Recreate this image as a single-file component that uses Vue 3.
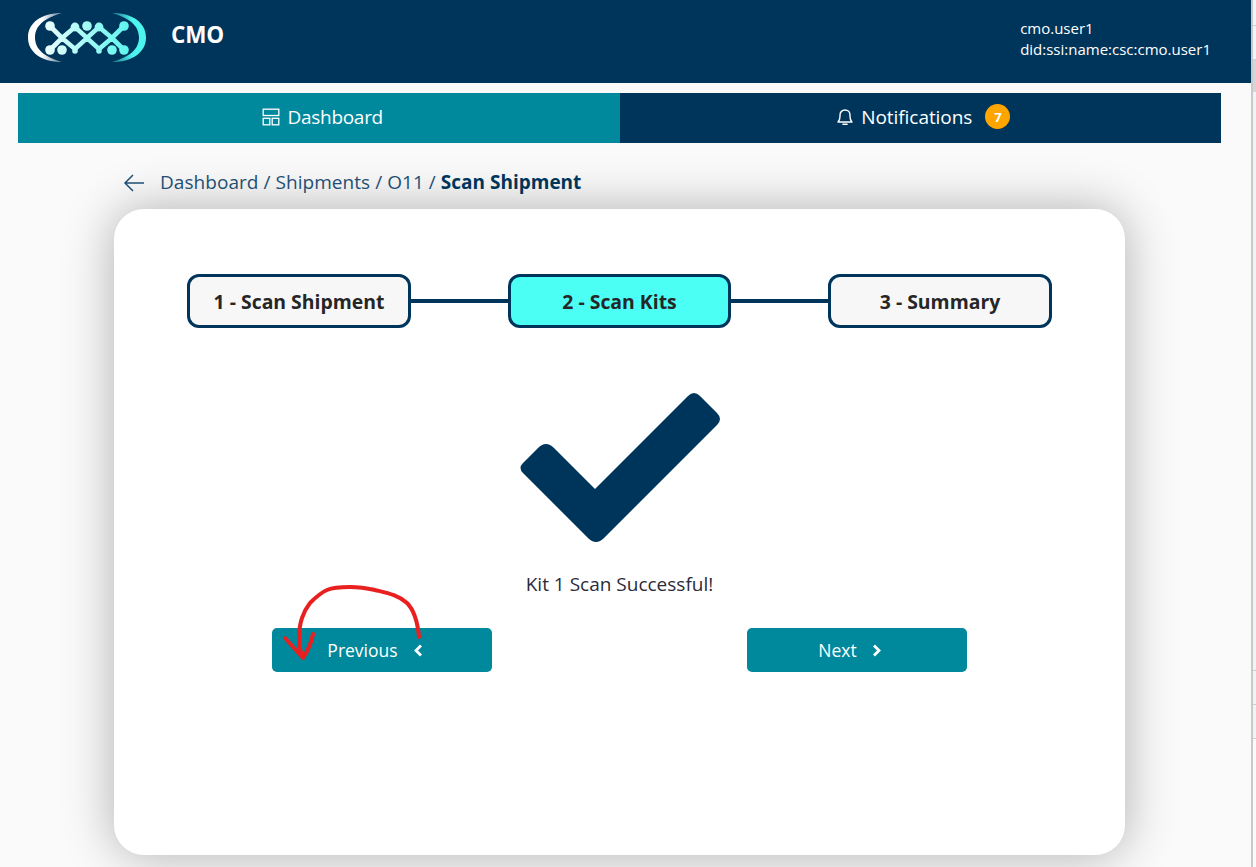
<script setup>
const crumbs = ['Dashboard', 'Shipments', 'O11']
const steps = [
  { label: '1 - Scan Shipment', width: 224 },
  { label: '2 - Scan Kits', width: 223, active: true },
  { label: '3 - Summary', width: 224 },
]
</script>

<template>
  <div class="page">
    <div class="main">
      <header class="topbar">
        <svg class="logo" width="120" height="54" viewBox="0 0 120 54">
          <defs>
            <linearGradient id="lg" gradientUnits="userSpaceOnUse" x1="20" x2="100" y1="0" y2="0">
              <stop offset="0" stop-color="#e8fdfc" />
              <stop offset="1" stop-color="#5ff6ef" />
            </linearGradient>
            <linearGradient id="arcL" gradientUnits="userSpaceOnUse" x1="1" x2="36" y1="0" y2="0">
              <stop offset="0.4" stop-color="#ffffff" />
              <stop offset="1" stop-color="#ffffff" stop-opacity="0.3" />
            </linearGradient>
            <linearGradient id="arcR" gradientUnits="userSpaceOnUse" x1="119" x2="84" y1="0" y2="0">
              <stop offset="0.4" stop-color="#4cf5ee" />
              <stop offset="1" stop-color="#4cf5ee" stop-opacity="0.3" />
            </linearGradient>
          </defs>
          <path d="M35 3 C14 3 1 13 1 27.5 C1 42 14 52 35 52 C22 48 8 42 8 27.5 C8 13 22 7 35 3Z" fill="url(#arcL)" />
          <path d="M85 3 C106 3 119 13 119 27.5 C119 42 106 52 85 52 C98 48 112 42 112 27.5 C112 13 98 7 85 3Z" fill="url(#arcR)" />
          <path d="M23 16 L35 28 L23 40 M35 28 L48 17 L60 28 L72 17 L85 28 L97 16 M85 28 L97 40 M35 28 L48 39 L60 28 L72 39 L85 28" stroke="url(#lg)" stroke-width="4.6" fill="none" stroke-linecap="round" />
          <g fill="url(#lg)">
            <circle cx="23" cy="16" r="4.8" /><circle cx="48" cy="17" r="4.4" />
            <circle cx="60" cy="16" r="4.8" /><circle cx="72" cy="17" r="4.4" />
            <circle cx="97" cy="16" r="4.8" /><circle cx="23" cy="40" r="4.8" />
            <circle cx="35" cy="40" r="4.8" /><circle cx="48" cy="41" r="2.8" />
            <circle cx="72" cy="41" r="2.8" /><circle cx="85" cy="40" r="4.8" />
            <circle cx="97" cy="40" r="4.8" />
          </g>
        </svg>
        <div class="brand">CMO</div>
        <div class="user">
          <div>cmo.user1</div>
          <div>did:ssi:name:csc:cmo.user1</div>
        </div>
      </header>

      <nav class="tabs">
        <div class="tab tab-active">
          <svg width="18" height="18" viewBox="0 0 18 18" fill="none" stroke="#fff" stroke-width="1.3">
            <rect x="1.2" y="1.2" width="15.6" height="6.3" />
            <rect x="1.2" y="10.3" width="6.6" height="6.5" />
            <rect x="10.2" y="10.3" width="6.6" height="6.5" />
          </svg>
          <span>Dashboard</span>
        </div>
        <div class="tab">
          <svg width="16" height="18" viewBox="0 0 16 18" fill="none" stroke="#fff" stroke-width="1.4">
            <path d="M1 14 C2.6 12.4 3 11 3 8.5 V7 C3 4 5.2 2 8 2 C10.8 2 13 4 13 7 V8.5 C13 11 13.4 12.4 15 14 Z" stroke-linejoin="round" />
            <path d="M6 16.3 H10" stroke-linecap="round" stroke-width="1.6" />
          </svg>
          <span class="notif">Notifications</span>
          <span class="badge">7</span>
        </div>
      </nav>

      <div class="content">
        <div class="crumbs">
          <svg class="back" width="22" height="20" viewBox="0 0 22 20" fill="none" stroke="#1f4e73" stroke-width="1.5">
            <path d="M21 10 H2 M10 2 L2 10 L10 18" />
          </svg>
          <span class="trail">
            <template v-for="c in crumbs" :key="c">{{ c }} / </template><b>Scan Shipment</b>
          </span>
        </div>

        <section class="card">
          <div class="stepper">
            <template v-for="(s, i) in steps" :key="s.label">
              <div v-if="i" class="link"></div>
              <div class="step" :class="{ on: s.active }" :style="{ width: s.width + 'px' }">{{ s.label }}</div>
            </template>
          </div>

          <svg class="check" width="202" height="152" viewBox="0 0 202 152">
            <path d="M76 97 L169 4 Q175 -2 181 4 L198 21 Q204 27 198 33 L85 146 Q77 154 69 146 L4 81 Q-1 76 4 71 L19 56 Q27 48 35 56 Z" fill="#00355b" />
          </svg>

          <p class="msg">Kit 1 Scan Successful!</p>

          <div class="actions">
            <div class="btn prev-wrap">
              <span>Previous</span>
              <svg width="10" height="13" viewBox="0 0 10 13" fill="none" stroke="#fff" stroke-width="2.8">
                <path d="M8 1.5 L3 6.5 L8 11.5" />
              </svg>
              <svg class="scribble" width="140" height="90" viewBox="0 0 140 90" fill="none" stroke="#e8201f" stroke-width="4" stroke-linecap="round" stroke-linejoin="round">
                <path d="M137 53 C136 42 134 28 125 19 C116 11 105 9 93 6 C84 4 76 3 68 3 C60 3 52 3 45 6 C38 9 33 14 28 19 C24 24 22 28 20 34 C18 40 17 47 17 54 C17 60 18 66 20 71 M3 54 L21 74 C25 68 29 60 31 50" />
              </svg>
            </div>
            <div class="btn">
              <span>Next</span>
              <svg width="10" height="13" viewBox="0 0 10 13" fill="none" stroke="#fff" stroke-width="2.8">
                <path d="M2 1.5 L7 6.5 L2 11.5" />
              </svg>
            </div>
          </div>
        </section>
      </div>
    </div>
    <aside class="gutter">
      <div class="g g1"></div>
      <div class="g g2"></div>
      <div class="g3"></div>
      <div class="g g4"></div>
      <div class="g g5"></div>
      <div class="g g6"></div>
      <div class="g7"></div>
    </aside>
  </div>
</template>

<style>
html, body { margin: 0; padding: 0; overflow: hidden; }
</style>

<style scoped>
.page {
  display: flex;
  width: 1256px;
  height: 867px;
  overflow: hidden;
  background: #fafafa;
  font-family: "Open Sans", "Noto Sans", sans-serif;
  color: #00355b;
}
.main { width: 1251px; flex: none; }
.gutter { width: 5px; flex: none; border-left: 2px solid #c9c9c9; box-sizing: border-box; background: #f1f3f6; display: flex; flex-direction: column; }
.g { box-sizing: border-box; border-bottom: 1px solid #cfcfcf; }
.g1 { height: 26px; }
.g2 { height: 34px; }
.g3 { height: 32px; background: #d6d6d6; }
.g4 { height: 579px; }
.g5 { height: 34px; }
.g6 { height: 34px; }
.g7 { flex: 1; background: #fafafa; }
.topbar {
  height: 83px;
  background: #00355b;
  display: flex;
  align-items: flex-start;
  color: #fff;
  position: relative;
}
.logo { margin: 10px 0 0 27px; flex: none; }
.brand { margin: 20px 0 0 24px; font-size: 22.5px; line-height: 30px; font-weight: 700; letter-spacing: -0.2px; }
.user { margin: 18px 0 0 auto; padding-right: 40px; font-size: 15px; line-height: 21px; }
.tabs { display: flex; margin: 10px 30px 0 18px; height: 50px; }
.tab {
  flex: 1;
  background: #00355b;
  color: #fff;
  display: flex;
  align-items: center;
  justify-content: center;
  gap: 8px;
  font-size: 19px;
  letter-spacing: -0.3px;
  padding-left: 7px;
  padding-bottom: 2px;
  box-sizing: border-box;
}
.notif { letter-spacing: -0.05px; }
.tab-active { background: #00889c; }
.badge {
  width: 25px;
  height: 25px;
  border-radius: 50%;
  background: #ffa500;
  color: #fff;
  font-size: 13px;
  font-weight: 700;
  display: flex;
  align-items: center;
  justify-content: center;
  margin: -1px 0 0 5px;
}
.content { padding: 0 126px 0 114px; }
.crumbs { height: 66px; display: flex; align-items: center; padding-left: 9px; gap: 15px; box-sizing: border-box; padding-top: 11px; position: relative; z-index: 1; }
.back { flex: none; margin-top: 2px; }
.trail { font-size: 19px; color: #1f4e73; letter-spacing: 0.05px; white-space: pre-wrap; }
.trail b { color: #00355b; font-weight: 700; letter-spacing: 0; }
.card {
  height: 646px;
  background: #fff;
  border-radius: 30px;
  box-shadow: 0 0 50px rgba(0, 0, 0, 0.3);
  display: flex;
  flex-direction: column;
  align-items: center;
  padding-top: 65px;
  box-sizing: border-box;
}
.stepper { display: flex; align-items: flex-start; height: 54px; }
.link { width: 97px; height: 4px; margin-top: 25px; background: #00355b; }
.step {
  height: 54px;
  box-sizing: border-box;
  border: 3px solid #00355b;
  border-radius: 12px;
  background: #f7f7f7;
  color: #262626;
  font-size: 19.4px;
  font-weight: 700;
  display: flex;
  align-items: center;
  justify-content: center;
}
.step.on { background: #4bfff5; }
.check { margin-top: 64px; flex: none; overflow: visible; }
.msg { margin: 27px 0 0; font-size: 19px; line-height: 26px; color: #2b2b3a; }
.actions { width: 695px; display: flex; justify-content: space-between; margin-top: 31px; }
.btn {
  width: 220px;
  height: 44px;
  background: #00889c;
  border-radius: 5px;
  color: #fff;
  font-size: 17.5px;
  display: flex;
  align-items: center;
  justify-content: center;
  gap: 15px;
  position: relative;
  padding-right: 14px;
  box-sizing: border-box;
}
.scribble { position: absolute; left: 10px; top: -44px; pointer-events: none; }
</style>
